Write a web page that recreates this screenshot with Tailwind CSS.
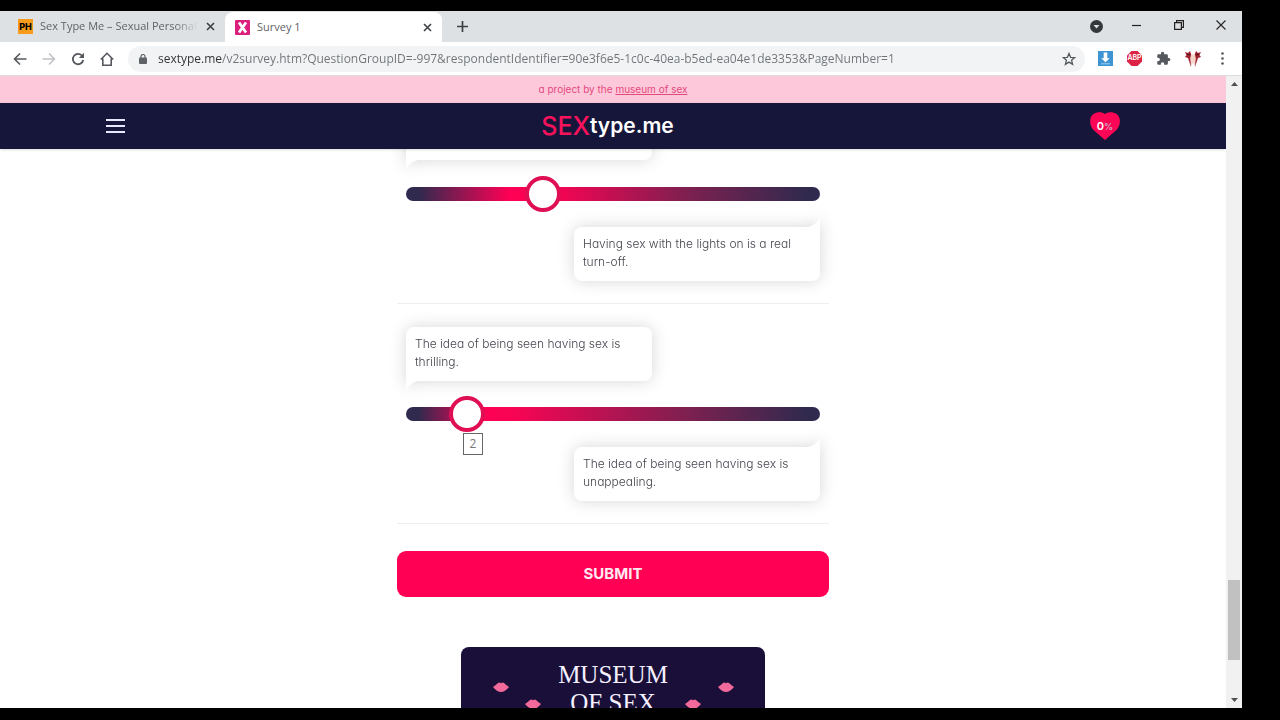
<!DOCTYPE html>
<html lang="en">
<head>
    <meta charset="UTF-8">
    <meta name="viewport" content="width=device-width, initial-scale=1.0">
    <title>Survey 1</title>
    <script src="https://cdn.jsdelivr.net/npm/@tailwindcss/browser@4"></script>
</head>
<body class="bg-black h-screen overflow-hidden pt-[11px] pb-3 pr-[38px] flex flex-col font-['Open_Sans',sans-serif]">

    <!-- Tab strip -->
    <header class="flex h-[31px] shrink-0 items-stretch bg-[#dee1e4] text-[11px] text-[#5f6368]">
        <div class="flex w-[225px] items-center pl-[18px] pr-2">
            <span class="flex size-[15px] shrink-0 items-center justify-center bg-[#f79b1c] font-['Inter',sans-serif] text-[9px] font-extrabold text-black">PH</span>
            <span class="ml-[7px] w-[158px] overflow-hidden whitespace-nowrap [mask-image:linear-gradient(to_right,black_85%,transparent)]">Sex Type Me – Sexual Personality</span>
            <button class="ml-2 shrink-0" aria-label="Close tab">
                <svg class="size-[9px]" viewBox="0 0 9 9" fill="none" stroke="#3c4043" stroke-width="1.6"><path d="M1 1l7 7M8 1L1 8"/></svg>
            </button>
        </div>
        <div class="mt-px flex w-[217px] items-center rounded-t-lg bg-white px-[10px]">
            <svg class="size-[15px]" viewBox="0 0 15 15"><rect width="15" height="15" rx="1" fill="#dc1f7c"/><path d="M4 2.500L11 12.500M11 2.500L4 12.500" stroke="#fff" stroke-width="2.800"/></svg>
            <span class="ml-[7px] grow">Survey 1</span>
            <button aria-label="Close tab">
                <svg class="size-[9px]" viewBox="0 0 9 9" fill="none" stroke="#3c4043" stroke-width="1.6"><path d="M1 1l7 7M8 1L1 8"/></svg>
            </button>
        </div>
        <button class="ml-[15px]" aria-label="New tab">
            <svg class="size-[11px]" viewBox="0 0 11 11" stroke="#3c4043" stroke-width="1.7"><path d="M5.5 0v11M0 5.5h11"/></svg>
        </button>
        <div class="ml-auto flex items-center pr-4">
            <button aria-label="Search tabs">
                <svg class="size-[13px]" viewBox="0 0 13 13"><circle cx="6.5" cy="6.5" r="6.5" fill="#35383b"/><path d="M3.5 5h6l-3 3.6z" fill="#dee1e4"/></svg>
            </button>
            <button class="ml-[29px]" aria-label="Minimize">
                <svg class="size-[9px]" viewBox="0 0 9 9" stroke="#222" stroke-width="1.2"><path d="M0 3.5h9"/></svg>
            </button>
            <button class="ml-[33px] mb-1" aria-label="Restore">
                <svg class="size-[10px]" viewBox="0 0 10 10" fill="none" stroke="#222" stroke-width="1.2"><path d="M.6 2.6h6.8v6.8H.6zM2.6 2.4V.6h6.8v6.8H7.6"/></svg>
            </button>
            <button class="ml-8 mb-1" aria-label="Close">
                <svg class="size-[10px]" viewBox="0 0 10 10" fill="none" stroke="#222" stroke-width="1.1"><path d="M.5.5l9 9M9.5.5l-9 9"/></svg>
            </button>
        </div>
    </header>

    <!-- Toolbar -->
    <div class="flex h-[34px] shrink-0 items-center border-b border-[#dadce0] bg-white pl-[13px] pr-3">
        <button aria-label="Back">
            <svg class="size-[14px]" viewBox="0 0 14 14" fill="none" stroke="#55585c" stroke-width="1.6"><path d="M13.5 7H2M7 1.5L1.5 7 7 12.5"/></svg>
        </button>
        <button class="ml-[15px]" aria-label="Forward">
            <svg class="size-[14px]" viewBox="0 0 14 14" fill="none" stroke="#bfc1c4" stroke-width="1.5"><path d="M.5 7H12M7 1.5L12.5 7 7 12.5"/></svg>
        </button>
        <button class="ml-[15px]" aria-label="Reload">
            <svg class="size-[14px]" viewBox="0 0 14 14"><path d="M11.3 4A5.2 5.2 0 1 0 12.2 8" fill="none" stroke="#55585c" stroke-width="1.8"/><path d="M13 .8V6H7.8z" fill="#55585c"/></svg>
        </button>
        <button class="ml-[15px]" aria-label="Home">
            <svg class="size-[14px]" viewBox="0 0 14 14" fill="none" stroke="#55585c" stroke-width="1.6"><path d="M.8 7.5L7 1.3l6.2 6.200M2.8 6.5v6.7h8.4V6.5"/></svg>
        </button>
        <form class="ml-[14px] flex h-[26px] grow items-center rounded-full bg-[#f1f3f4] pl-[11px] pr-[9px]">
            <svg class="h-[10px] w-2 shrink-0" viewBox="0 0 8 10"><rect y="3.5" width="8" height="6.5" rx="1" fill="#5f6368"/><path d="M2 4V2.5a2 2 0 0 1 4 0V4" fill="none" stroke="#5f6368" stroke-width="1.2"/></svg>
            <input type="text" aria-label="Address" class="ml-[11px] min-w-0 grow bg-[linear-gradient(to_right,#303336_64px,#6f7377_64px)] bg-clip-text text-[12px] text-transparent outline-none" value="sextype.me/v2survey.htm?QuestionGroupID=-997&amp;respondentIdentifier=90e3f6e5-1c0c-40ea-b5ed-ea04e1de3353&amp;PageNumber=1">
            <button type="button" aria-label="Bookmark">
                <svg class="size-[14px]" viewBox="0 0 14 14" fill="none" stroke="#55585c" stroke-width="1.3"><path d="M7 1.5l1.6 3.8 4.1.3-3.1 2.7 1 4L7 10.1l-3.6 2.2 1-4L1.3 5.6l4.1-.3z"/></svg>
            </button>
        </form>
        <div class="ml-[13px] flex items-center gap-[14px]">
            <button aria-label="Downloader">
                <svg class="size-[15px]" viewBox="0 0 15 15"><rect width="15" height="15" fill="#3f95d3"/><path d="M5.7 1.5h3.6v5.7h2.5L7.5 11.3 3.2 7.2h2.5z" fill="#fff"/><path d="M3 12.8h9" stroke="#9fd0f0"/></svg>
            </button>
            <button class="flex size-[15px] items-center justify-center bg-[#dc2346] font-['Inter',sans-serif] text-[7px] font-semibold text-white [clip-path:polygon(30%_0,70%_0,100%_30%,100%_70%,70%_100%,30%_100%,0_70%,0_30%)]">ABP</button>
            <button aria-label="Extensions">
                <svg class="size-[15px]" viewBox="0 0 24 24" fill="#55585c"><path d="M20.5 11H19V7a2 2 0 0 0-2-2h-4V3.5a2.5 2.5 0 0 0-5 0V5H4a2 2 0 0 0-2 2v3.8h1.5a2.7 2.7 0 0 1 0 5.400H2V20a2 2 0 0 0 2 2h3.8v-1.5a2.7 2.7 0 0 1 5.4 0V22H17a2 2 0 0 0 2-2v-4h1.5a2.5 2.5 0 0 0 0-5z"/></svg>
            </button>
            <button aria-label="Profile">
                <svg class="size-4" viewBox="0 0 16 16"><path d="M0 1l3 1 2-2 1.5 4L5.5 7l.5 9-3-9L0 6l1.5-2z" fill="#a3242f"/><path d="M16 1l-3 1-2-2-1.5 4 1 3-.5 9 3-9 3-1-1.5-2z" fill="#a3242f"/><path d="M6 3.5h4l.5 4L9.5 16 8 11l-1.5 5-1-8.5z" fill="#f3d5c9"/><path d="M2 3l3 1M14 3l-3 1" stroke="#3b1518"/></svg>
            </button>
            <button class="px-[6px]" aria-label="Menu">
                <svg class="h-[13px] w-[3px]" viewBox="0 0 3 13" fill="#55585c"><circle cx="1.5" cy="1.5" r="1.3"/><circle cx="1.5" cy="6.5" r="1.3"/><circle cx="1.5" cy="11.5" r="1.3"/></svg>
            </button>
        </div>
    </div>

    <!-- Viewport -->
    <div class="flex min-h-0 grow bg-white">
        <div class="flex min-w-0 grow flex-col overflow-hidden font-['Inter',sans-serif] [font-feature-settings:'cv11']">
            <p class="h-[27px] shrink-0 bg-[#fdc9da] text-center text-[10px] leading-[26px] text-[#e5487e]">a project by the <a href="#" class="underline">museum of sex</a></p>

            <nav class="z-10 flex h-[46px] shrink-0 items-center justify-between bg-[#15163a] px-[106px] shadow-sm">
                <button aria-label="Open menu">
                    <svg class="h-[14px] w-[19px]" viewBox="0 0 19 14" stroke="#e9e6ff" stroke-width="2"><path d="M0 1h19M0 7h19M0 13h19"/></svg>
                </button>
                <a href="#" class="flex items-center text-[21px] font-semibold leading-8 text-white"><span class="text-[25px] font-medium text-[#f8125c]">SEX</span><span>type.me</span></a>
                <div class="relative flex h-7 w-[30px] items-center justify-center">
                    <svg class="absolute inset-0 size-full" viewBox="0 0 30 28"><path d="M15 28L3.5 18C-1 13-1 5 3.500 2 7.5-.5 12 0 15 2 18 0 22.5-.5 26.5 2 31 5 31 13 26.5 18z" fill="#ff0556"/></svg>
                    <span class="relative text-[11px] font-semibold text-white">0<span class="text-[9px] text-[#c9a9c4]">%</span></span>
                </div>
            </nav>

            <main class="min-h-0 grow overflow-hidden">
                <form class="mx-auto -mt-[66px] w-full max-w-[432px] text-[12px] font-light leading-[18px] text-[#45464f]">
                    <!-- Lights question -->
                    <section class="border-b border-[#eeeeee] px-[9px] pt-[23px] pb-[22px]">
                        <div class="relative h-[54px] w-[246px] rounded-lg rounded-bl-none bg-white px-[9px] py-2 drop-shadow-[0_0_8px_rgba(0,0,0,0.16)]">
                            <label for="lights">Having sex with the lights on is a real turn-on.</label>
                            <svg class="absolute left-0 top-full h-[9px] w-3" viewBox="0 0 12 9"><path d="M0 0h12Q5 1 0 9z" fill="#fff"/></svg>
                        </div>
                        <input id="lights" type="range" min="0" max="200" value="63" class="mt-4 mb-[15px] block h-9 w-full appearance-none bg-transparent [&::-webkit-slider-runnable-track]:h-[14px] [&::-webkit-slider-runnable-track]:rounded-full [&::-webkit-slider-runnable-track]:bg-[linear-gradient(to_right,#302a4e_3%,#ff0055_25%,#f00553_38%,#7d2050_68%,#302a4e_97%)] [&::-webkit-slider-thumb]:-mt-[11px] [&::-webkit-slider-thumb]:size-9 [&::-webkit-slider-thumb]:appearance-none [&::-webkit-slider-thumb]:rounded-full [&::-webkit-slider-thumb]:border-4 [&::-webkit-slider-thumb]:border-[#e00f53] [&::-webkit-slider-thumb]:bg-white">
                        <div class="relative ml-auto h-[54px] w-[246px] rounded-lg rounded-tr-none bg-white px-[9px] py-2 drop-shadow-[0_0_8px_rgba(0,0,0,0.16)]">
                            <p>Having sex with the lights on is a real turn-off.</p>
                            <svg class="absolute right-0 bottom-full h-[9px] w-3" viewBox="0 0 12 9"><path d="M12 9H0Q7 8 12 0z" fill="#fff"/></svg>
                        </div>
                    </section>

                    <!-- Being seen question -->
                    <section class="border-b border-[#eeeeee] px-[9px] pt-[23px] pb-[22px]">
                        <div class="relative h-[54px] w-[246px] rounded-lg rounded-bl-none bg-white px-[9px] py-2 drop-shadow-[0_0_8px_rgba(0,0,0,0.16)]">
                            <label for="seen">The idea of being seen having sex is thrilling.</label>
                            <svg class="absolute left-0 top-full h-[9px] w-3" viewBox="0 0 12 9"><path d="M0 0h12Q5 1 0 9z" fill="#fff"/></svg>
                        </div>
                        <div class="relative mt-[15px] mb-[15px]">
                            <input id="seen" type="range" min="0" max="200" value="23" class="block h-9 w-full appearance-none bg-transparent [&::-webkit-slider-runnable-track]:h-[14px] [&::-webkit-slider-runnable-track]:rounded-full [&::-webkit-slider-runnable-track]:bg-[linear-gradient(to_right,#302a4e_3%,#ff0055_18%,#f80454_26%,#7d2050_68%,#302a4e_97%)] [&::-webkit-slider-thumb]:-mt-[11px] [&::-webkit-slider-thumb]:size-9 [&::-webkit-slider-thumb]:appearance-none [&::-webkit-slider-thumb]:rounded-full [&::-webkit-slider-thumb]:border-4 [&::-webkit-slider-thumb]:border-[#e00f53] [&::-webkit-slider-thumb]:bg-white">
                            <output for="seen" class="absolute left-[57px] top-full mt-px flex h-[22px] w-5 items-center justify-center border border-[#666] bg-white font-['Open_Sans',sans-serif] font-normal text-[#777]">2</output>
                        </div>
                        <div class="relative ml-auto h-[54px] w-[246px] rounded-lg rounded-tr-none bg-white px-[9px] py-2 drop-shadow-[0_0_8px_rgba(0,0,0,0.16)]">
                            <p>The idea of being seen having sex is unappealing.</p>
                            <svg class="absolute right-0 bottom-full h-[9px] w-3" viewBox="0 0 12 9"><path d="M12 9H0Q7 8 12 0z" fill="#fff"/></svg>
                        </div>
                    </section>

                    <button type="submit" class="mt-[27px] h-[46px] w-full rounded-[9px] bg-[#ff0055] text-[15px] font-bold text-[#ffe9f1]">SUBMIT</button>
                </form>

                <footer class="relative mx-auto mt-[50px] h-[150px] max-w-[304px] rounded-lg bg-[#190f38] pt-[14px]">
                    <p class="text-center font-['Liberation_Serif',serif] text-[25px] leading-[28px] text-[#f4f0ff]">MUSEUM<br>OF SEX</p>
                    <svg class="absolute left-0 top-0 h-[70px] w-full" viewBox="0 0 304 70" fill="#f2699b">
                        <defs><path id="lips" d="M0 5Q3 3 5 1Q6.5 0 8 1.3Q9.5 0 11 1Q13 3 16 5Q12 10 8 10Q4 10 0 5z"/></defs>
                        <use href="#lips" x="32" y="35"/>
                        <use href="#lips" x="64" y="52"/>
                        <use href="#lips" x="224" y="52"/>
                        <use href="#lips" x="257" y="35"/>
                    </svg>
                </footer>
            </main>
        </div>

        <!-- Scrollbar -->
        <div class="flex w-4 shrink-0 flex-col items-center bg-[#f1f1f1] py-[6px]">
            <svg class="h-1 w-[7px]" viewBox="0 0 7 4"><path d="M0 4L3.500 0 7 4z" fill="#505050"/></svg>
            <div class="mt-auto h-20 w-3 bg-[#c1c1c1]"></div>
            <svg class="mt-[38px] h-1 w-[7px]" viewBox="0 0 7 4"><path d="M0 0l3.500 4L7 0z" fill="#505050"/></svg>
        </div>
    </div>
</body>
</html>
